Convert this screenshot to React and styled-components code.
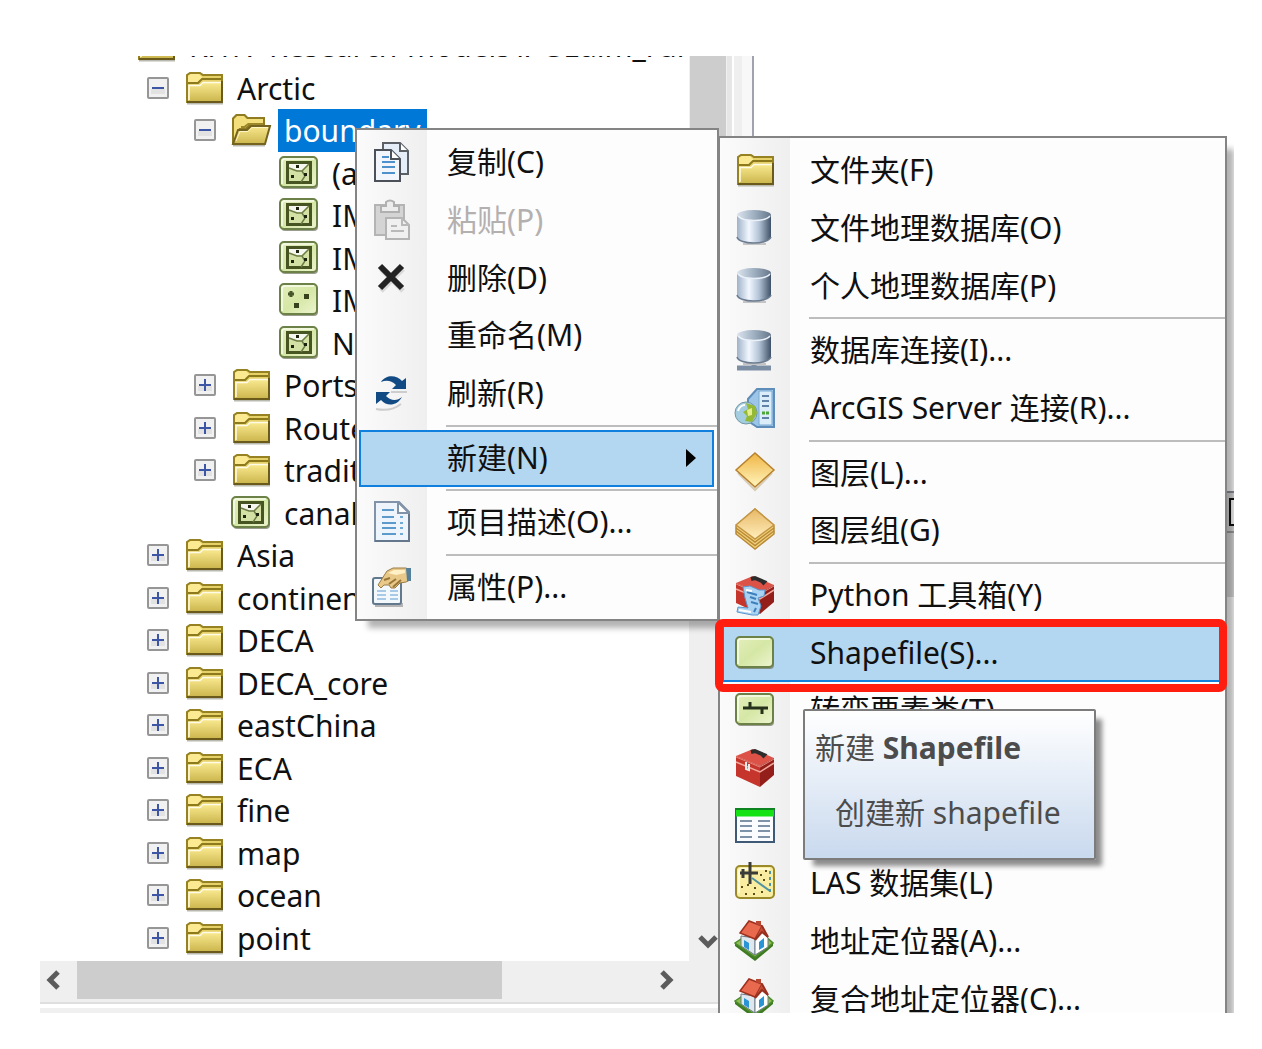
import React, { useState } from "react";
import styled, { createGlobalStyle, css } from "styled-components";

const GlobalStyle = createGlobalStyle`
  * {
    box-sizing: border-box;
  }

  body {
    margin: 0;
    background: #ffffff;
    font-family: "Noto Sans", "Noto Sans CJK SC", sans-serif;
    font-size: 30px;
    line-height: 40px;
    color: #101010;
  }

  button {
    font: inherit;
    color: inherit;
    background: none;
    border: none;
    padding: 0;
    margin: 0;
    text-align: left;
    cursor: default;
  }

  ul {
    list-style: none;
    margin: 0;
    padding: 0;
  }
`;

const Page = styled.main`
  padding: 56px 28px 36px 40px;
`;

const Workspace = styled.div`
  position: relative;
  display: flex;
  overflow: hidden;
`;

/* ---------- catalog pane ---------- */

const Pane = styled.section`
  flex: none;
  width: 687px;
  background: #efefef;
`;

const PaneBody = styled.div`
  display: flex;
`;

const Tree = styled.ul`
  flex: 1;
  min-width: 0;
  margin-top: -32px;
  padding-bottom: 2px;
  display: grid;
  grid-auto-rows: 42px 43px;
  background: #ffffff;
  overflow: hidden;
`;

const indents = [59, 107, 154, 202];

const TreeRow = styled.li`
  display: flex;
  align-items: center;
  padding-left: ${(props) => indents[props.$level]}px;
  white-space: nowrap;
`;

const Expander = styled.button`
  flex: none;
  display: flex;
  width: 22px;
  height: 22px;
  margin-right: 15px;
`;

const ExpanderSpace = styled.span`
  flex: none;
  width: 37px;
`;

const TreeIcon = styled.span`
  flex: none;
  display: flex;
  width: 47px;
`;

const TreeLabel = styled.button`
  height: 43px;
  padding: 2px 6px 0;

  ${(props) =>
    props.$selected &&
    css`
      background: #0078d7;
      color: #ffffff;
    `}
`;

const VScroll = styled.div`
  flex: none;
  width: 38px;
  display: flex;
  flex-direction: column;
  justify-content: space-between;
  align-items: center;
`;

const VThumb = styled.div`
  width: 36px;
  height: 400px;
  background: #cdcdcd;
`;

const ScrollButton = styled.button`
  flex: none;
  display: flex;
  align-items: center;
  justify-content: center;
  width: 37px;
  height: 38px;
`;

const HScroll = styled.div`
  display: flex;
  width: 649px;
  height: 38px;

  ${ScrollButton} {
    padding-right: 7px;
  }
`;

const HThumb = styled.div`
  width: 425px;
  background: #cdcdcd;
  margin-right: auto;
`;

const PaneFooter = styled.div`
  height: 14px;
  background: #f0f0f0;
  border-top: 3px solid #efefef;

  &::before {
    content: "";
    display: block;
    height: 4px;
    border-top: 2px solid #dfdfdf;
    background: #ffffff;
  }
`;

const Splitter = styled.div`
  flex: none;
  width: 27px;
  border-right: 2px solid #a0a3ae;
  background: linear-gradient(90deg, #e6e6e6 5px, #ffffff 5px 7px, #efefef 7px 15px, #f8f8f8 15px);
`;

/* ---------- map side, mostly hidden by the menus ---------- */

const MapSide = styled.div`
  flex: 1;
  display: flex;
  flex-direction: column;
  align-items: flex-end;
`;

const MapView = styled.div`
  height: 435px;
`;

const Ruler = styled.div`
  width: 9px;
  height: 42px;
  padding: 5px 0 5px 4px;
  background: #dcdcdc;
  border-top: 2px solid #8c909c;
  border-bottom: 2px solid #a0a0a0;
`;

const RulerBox = styled.div`
  height: 28px;
  border: 2px solid #101010;
  border-right: none;
  background: #ffffff;
`;

const MapStatus = styled.div`
  width: 9px;
  height: 64px;
  background: #dcdcdc;
`;

/* ---------- menus ---------- */

const Menu = styled.ul`
  position: absolute;
  left: ${(props) => props.$left}px;
  top: ${(props) => props.$top}px;
  width: ${(props) => props.$width}px;
  border: 2px solid #848484;
  padding: 4px 0 2px;
  background: linear-gradient(90deg, #fbfbfb, #efefef 70px, #fdfdfd 70px);
  box-shadow: 10px 10px 6px -3px rgba(0, 0, 0, 0.3);
`;

const MenuEntry = styled.li`
  position: relative;
  padding: 0 3px 0 2px;

  ${(props) =>
    props.$divided &&
    css`
      &::before {
        content: "";
        display: block;
        height: 7px;
        margin: 0 -3px 0 87px;
        background: linear-gradient(#fdfdfd 2px, #bdbdbd 2px 4px, #fdfdfd 4px);
      }
    `}
`;

const MenuButton = styled.button`
  display: flex;
  align-items: center;
  width: 100%;
  height: 58px;
  padding: 0 15px 2px 0;
  border: 2px solid transparent;
  white-space: nowrap;

  li:nth-child(3n) > & {
    height: 57px;
  }

  &:disabled {
    color: #b4b0b0;
  }

  ${(props) =>
    props.$active &&
    css`
      border-color: #0f80de;
      background: #b3d6f1;
    `}
`;

const MenuIcon = styled.span`
  flex: none;
  display: flex;
  justify-content: center;
  width: 62px;
  margin-right: 24px;
`;

const MenuLabel = styled.span`
  flex: 1;
`;

const Marker = styled.div`
  position: absolute;
  inset: -6px -2px -10px -5px;
  border: 8px solid #ff1e10;
  border-radius: 8px;
  pointer-events: none;
`;

const Tooltip = styled.div`
  position: absolute;
  left: 763px;
  top: 653px;
  width: 293px;
  padding: 17px 10px 25px;
  border: 2px solid #7c7c7c;
  border-radius: 2px;
  background: linear-gradient(#ffffff, #c9d9ee);
  box-shadow: 8px 8px 5px -2px rgba(0, 0, 0, 0.45);
  color: #4c4c4c;
  white-space: nowrap;
`;

const TooltipTitle = styled.p`
  margin: 0 0 25px;
`;

const TooltipText = styled.p`
  margin: 0;
  padding-left: 20px;
`;

/* ---------- icons ---------- */

const Box = ({ open }) => (
  <svg width="22" height="22" viewBox="0 0 22 22">
    <rect x="1" y="1" width="20" height="20" rx="1" fill="#f1f1f1" stroke="#969696" strokeWidth="2" />
    <path d="M4 17H18V12H4Z" fill="#e2e2e2" />
    <path d={open ? "M5 11H17" : "M5 11H17M11 5V17"} stroke="#3d55a5" strokeWidth="2" />
  </svg>
);

const FolderIcon = () => (
  <svg width="40" height="34" viewBox="-1 0 40 34">
    <defs>
      <linearGradient id="folder" x1="0" y1="0" x2="0" y2="1">
        <stop offset="0" stopColor="#f8e88e" />
        <stop offset="1" stopColor="#cdb74f" />
      </linearGradient>
    </defs>
    <path d="M2 32.500H38" stroke="#b9b9b0" strokeWidth="2" />
    <path d="M2 31V4L5 2H15L18 4H37V31Z" fill="#e6d168" stroke="#968222" strokeWidth="2" />
    <path d="M3 12V5L6 3H14L17 6V9L14 12Z" fill="#fbea91" />
    <path d="M3 12H13L17 8H36" stroke="#8d7a1c" strokeWidth="2" fill="none" />
    <path d="M4 30V15H15L18 12H36V30Z" fill="url(#folder)" />
    <path d="M4 29V14.500H15L18 11.500H36" stroke="#fffbe6" strokeWidth="1.500" fill="none" />
    <path d="M2 31H37V10" stroke="#6a5a1c" strokeWidth="2" fill="none" />
  </svg>
);

const OpenFolderIcon = () => (
  <svg width="42" height="34" viewBox="1 0 42 34">
    <path d="M3 32.500H35" stroke="#b9b9b0" strokeWidth="2" />
    <path d="M2 31V5L6 1H15L18 4H35V14H32V31Z" fill="#8f7b22" />
    <path d="M4 28V6L7 3H14L17 6H33V12H18L15 15H9Z" fill="#f3df7c" />
    <path d="M18 10H33V12H18L15 15H11V13H14Z" fill="#9c8729" />
    <path d="M3 31L8 17H17L21 13H40L35 31Z" fill="url(#folder)" stroke="#756420" strokeWidth="2" />
    <path d="M6 28L10 18.500H18L22 14.500H38" stroke="#fff6c4" strokeWidth="1" fill="none" />
  </svg>
);

const Tile = ({ children }) => (
  <svg width="40" height="34" viewBox="0 0 40 34">
    <defs>
      <linearGradient id="tile" x1="0" y1="0" x2="1" y2="1">
        <stop offset="0" stopColor="#e4efbd" />
        <stop offset="0.500" stopColor="#d5e7a5" />
        <stop offset="1" stopColor="#edf4cf" />
      </linearGradient>
    </defs>
    <rect x="2" y="3" width="37" height="30" rx="4" fill="#6d7260" opacity="0.700" />
    <rect x="1" y="1" width="37" height="30" rx="4" fill="url(#tile)" stroke="#6c8148" strokeWidth="2" />
    <path d="M3 28V6Q3 3 6 3H35" stroke="#f9fdec" strokeWidth="1.500" fill="none" />
    {children}
  </svg>
);

const PolygonIcon = () => (
  <Tile>
    <rect x="8.500" y="6.500" width="23" height="20" fill="#d3e2a4" stroke="#475523" strokeWidth="3" />
    <path d="M10 8H29L23 14H17L10 12Z" fill="#f5f7ee" />
    <path d="M10 12L18 15H23L30 8M23 15L26 20L22 26" stroke="#6d7c45" strokeWidth="1.500" fill="none" />
    <path d="M17 9h3v3h-3zM12 19h3v3h-3zM25 17h3v3h-3z" fill="#1c2410" />
  </Tile>
);

const PointIcon = () => (
  <Tile>
    <path d="M12 8v6M9 11h6" stroke="#47552a" strokeWidth="3" />
    <path d="M25 11h5v5h-5zM15 20h5v5h-5z" fill="#35421c" />
  </Tile>
);

const RouteIcon = () => (
  <Tile>
    <path d="M8 15H33M15 9V15M27 15V21" stroke="#26301a" strokeWidth="3" fill="none" />
  </Tile>
);

const CopyIcon = () => (
  <svg width="36" height="42" viewBox="0 0 36 42">
    <path d="M9 2H26L34 10V33H9Z" fill="#e4edf8" stroke="#5b5f66" strokeWidth="2" />
    <path d="M26 2V10H34" fill="#ffffff" stroke="#5b5f66" strokeWidth="2" />
    <path d="M1 9H17L26 18V40H1Z" fill="#f2f6fc" stroke="#4c5058" strokeWidth="2" />
    <path d="M17 9V18H26" fill="#ffffff" stroke="#4c5058" strokeWidth="2" />
    <path d="M8 16H15M8 21H21M8 26H21M8 32H21" stroke="#4d90cc" strokeWidth="2" />
  </svg>
);

const PasteIcon = () => (
  <svg width="36" height="42" viewBox="0 0 36 42">
    <path d="M1 6H30V36H1Z" fill="#d4d4d4" stroke="#b4b4b4" strokeWidth="2" />
    <path d="M7 13V7H12V3Q16 0 20 3V7H25V13Z" fill="#ececec" stroke="#b0b0b0" strokeWidth="2" />
    <path d="M12 19H28L35 26V40H12Z" fill="#f0f0f0" stroke="#b4b4b4" strokeWidth="2" />
    <path d="M28 19V26H35M17 27H23M17 32H30" stroke="#b9b9b9" strokeWidth="2" fill="none" />
  </svg>
);

const DeleteIcon = () => (
  <svg width="30" height="32" viewBox="0 0 30 32">
    <path d="M4 7L26 29M26 7L4 29" stroke="#d9d9d9" strokeWidth="5" />
    <path d="M3 4L25 26M25 4L3 26" stroke="#222222" strokeWidth="6" />
  </svg>
);

const RefreshIcon = () => (
  <svg width="36" height="36" viewBox="1 1 36 36">
    <path d="M3 35Q18 38 28 30M18 18H34" stroke="#cdcdcd" strokeWidth="2" fill="none" />
    <path d="M8 8C13 0 24 1 29 7L33 4V15H19L23 11C18 6 13 6 8 8Z" fill="#124a84" />
    <path d="M29 23C24 32 14 33 8 26L3 30V18H17L13 22C18 27 24 27 29 23Z" fill="#124a84" />
  </svg>
);

const DocumentIcon = () => (
  <svg width="36" height="42" viewBox="0 0 36 42">
    <path d="M1 1H25L35 11V40H1Z" fill="#eef4fb" stroke="#8193a8" strokeWidth="2" />
    <path d="M1 40H35V11" stroke="#65778c" strokeWidth="2" fill="none" />
    <path d="M24 1V12H35Z" fill="#ffffff" stroke="#8193a8" strokeWidth="2" />
    <path d="M8 9H20M8 16H20M8 22H22M8 27H22M8 33H22" stroke="#5c9acb" strokeWidth="2" />
    <path d="M26 16h3M26 22h3M26 27h3M26 33h3" stroke="#6fa9d6" strokeWidth="2" />
  </svg>
);

const PropertiesIcon = () => (
  <svg width="40" height="42" viewBox="0 0 40 42">
    <path d="M3 39H31" stroke="#b4b4b4" strokeWidth="4" />
    <rect x="1" y="12" width="28" height="26" rx="2" fill="#f3f8fc" stroke="#62788c" strokeWidth="2" />
    <path d="M5 25H14M18 25H26M5 29H14M18 29H26M5 33H14M18 33H26" stroke="#a9cae6" strokeWidth="2" />
    <path d="M6 19L15 5L21 2H34L38 4V14L34 16L28 17L23 22L19 22L17 19L12 19L9 22Z" fill="#e8c98a" stroke="#9b7b44" strokeWidth="1" />
    <path d="M16 7L22 4H33V7L24 9Z" fill="#fff0c6" />
    <path d="M12 14L18 12M17 18L24 13M21 21L29 14" stroke="#9a7638" strokeWidth="2" />
    <path d="M34 2H39V15H35Z" fill="#55809b" />
  </svg>
);

const CylinderIcon = ({ network }) => (
  <svg width="38" height={network ? 42 : 38} viewBox={network ? "1 0 38 42" : "1 0 38 38"}>
    <defs>
      <linearGradient id="metal">
        <stop offset="0" stopColor="#9fb2c8" />
        <stop offset="0.350" stopColor="#f2f7ff" />
        <stop offset="0.650" stopColor="#b3c3d6" />
        <stop offset="1" stopColor="#3f5167" />
      </linearGradient>
      <linearGradient id="metalTop">
        <stop offset="0" stopColor="#dbe4ee" />
        <stop offset="0.500" stopColor="#9fb0c1" />
        <stop offset="1" stopColor="#66778c" />
      </linearGradient>
    </defs>
    {network && <path d="M19 32V38M2 39H36" stroke="#7c8ea3" strokeWidth="5" />}
    <path d="M8 35H31" stroke="#c4c4c4" strokeWidth="2" />
    <path d="M2 7V28C4 36 33 36 36 28V7Z" fill="url(#metal)" />
    <path d="M2 28C4 36 33 36 36 28" stroke="#6b7c90" strokeWidth="1.500" fill="none" />
    <ellipse cx="19" cy="6" rx="17" ry="5" fill="url(#metalTop)" />
    <path d="M3 7C8 13 30 13 35 7" stroke="#eaf0f8" strokeWidth="1.500" fill="none" />
  </svg>
);

const ServerIcon = () => (
  <svg width="42" height="42" viewBox="0 0 42 42">
    <path d="M14 12L23 2H40V40H23L14 34Z" fill="#9cc5e8" stroke="#5d8db8" strokeWidth="2" />
    <path d="M25 4H38V38H25Z" fill="#dcedfa" stroke="#79a8d1" strokeWidth="1" />
    <path d="M28 9H35M28 14H35M28 19H35M28 31H35" stroke="#5f82a8" strokeWidth="2" />
    <path d="M28 26h3M32 26h3" stroke="#4da63a" strokeWidth="3" />
    <circle cx="12" cy="26" r="11" fill="#a4cde0" stroke="#7298a4" strokeWidth="1" />
    <path d="M12 16L21 19L23 26L18 35L11 34L13 29L9 25L14 22Z" fill="#94b935" />
    <path d="M13 23L18 21L18 28L14 29Z" fill="#e5ef8d" />
    <path d="M4 24Q6 18 11 18" stroke="#ffffff" strokeWidth="2" fill="none" />
  </svg>
);

const LayerIcon = () => (
  <svg width="42" height="44" viewBox="0 0 42 44">
    <path d="M4 22L21 39L38 22" stroke="#d8cbb2" strokeWidth="2" fill="none" />
    <defs>
      <linearGradient id="layer" x1="0" y1="0" x2="0" y2="1">
        <stop offset="0" stopColor="#f0b545" />
        <stop offset="1" stopColor="#fff5bd" />
      </linearGradient>
    </defs>
    <path d="M21 2L40 19L21 36L2 19Z" fill="url(#layer)" stroke="#b6822e" strokeWidth="1.500" />
  </svg>
);

const LayerGroupIcon = () => (
  <svg width="42" height="44" viewBox="0 0 42 44">
    <defs>
      <linearGradient id="layerTop" x1="0" y1="0" x2="0" y2="1">
        <stop offset="0" stopColor="#e8b866" />
        <stop offset="1" stopColor="#ffeebc" />
      </linearGradient>
    </defs>
    <path d="M21 1L40 18V26L21 41L2 26V18Z" fill="#f1d07c" stroke="#b88a38" strokeWidth="1.500" />
    <path d="M2 20L21 34L40 20M2 23L21 37.500L40 23" stroke="#b98a35" strokeWidth="1.500" fill="none" />
    <path d="M21 1L40 17L21 31L2 17Z" fill="url(#layerTop)" stroke="#c39544" strokeWidth="1.500" />
  </svg>
);

const ToolboxIcon = ({ script }) => (
  <svg width="42" height="42" viewBox="0 0 42 42">
    <path d="M2 9L19 2L40 11L26 19Z" fill="#dd5246" />
    <path d="M2 9L26 19V40L2 29Z" fill="#c5352c" />
    <path d="M26 19L40 11V28L26 40Z" fill="#931e1a" />
    <path d="M2 15L26 25L40 16" stroke="#f1a59b" strokeWidth="1.500" fill="none" />
    <path d="M2 10L26 20L40 12" stroke="#e98579" strokeWidth="1" fill="none" />
    <path d="M17 5L21 4L30 8L28 10" stroke="#2c2c2c" strokeWidth="4" fill="none" />
    <path d="M12 15V22L15 23V17" stroke="#e9e9e9" strokeWidth="2" fill="none" />
    {script && (
      <>
        <path d="M9 13L16 12L25 16L31 16L30 22L24 24L27 32L24 41H18L3 38L4 33L14 34L11 24Z" fill="#a9d2f3" stroke="#5a97cb" strokeWidth="1" />
        <path d="M13 18L23 21M16 23L22 25M17 28L24 30M22 34L20 38" stroke="#3d80bb" strokeWidth="2" fill="none" />
        <path d="M5 36L17 38M12 16L18 17" stroke="#ffffff" strokeWidth="2" />
      </>
    )}
  </svg>
);

const TableIcon = () => (
  <svg width="42" height="36" viewBox="0 0 42 36">
    <rect x="2" y="2" width="38" height="32" fill="#fafcff" stroke="#3f5a76" strokeWidth="2" />
    <path d="M2 5H40" stroke="#15e215" strokeWidth="7" />
    <path d="M1 1H41" stroke="#0c8420" strokeWidth="2" />
    <path d="M6 13H18M6 18H18M6 23H18M6 29H18M24 13H36M24 18H36M24 23H36M24 29H36" stroke="#7f93a8" strokeWidth="2" />
  </svg>
);

const LasIcon = () => (
  <svg width="42" height="44" viewBox="0 0 42 44">
    <rect x="2" y="5" width="38" height="32" rx="4" fill="#f8eda0" stroke="#9b8a2a" strokeWidth="2" />
    <path d="M5 32V10Q5 8 8 8H36" stroke="#fffbd8" strokeWidth="2" fill="none" />
    <path d="M7 25h2v2h-2zM13 23h2v2h-2zM11 32h2v2h-2zM20 26h2v2h-2zM19 32h2v2h-2zM27 30h2v2h-2zM26 13h2v2h-2zM31 9h2v2h-2zM29 18h2v2h-2z" fill="#5c4e18" />
    <path d="M18 17L36 30" stroke="#4f92a2" strokeWidth="2" />
    <path d="M36 10V34" stroke="#4f92a2" strokeWidth="2" strokeDasharray="3 3" />
    <path d="M16 1V23M6 12H24M9 8V17" stroke="#3b3b38" strokeWidth="3" />
  </svg>
);

const HouseIcon = () => (
  <svg width="42" height="44" viewBox="1 0 42 44">
    <path d="M2 24L22 38L40 24V27L22 42L2 27Z" fill="#3f7a22" />
    <path d="M2 24L14 16H31L40 24L22 38Z" fill="#8ec04e" stroke="#4b8a28" strokeWidth="1.500" />
    <path d="M8 17V27L22 36V19Z" fill="#dfe8ef" stroke="#6f7d88" strokeWidth="1" />
    <path d="M22 21L29 12L35 19V28L22 36Z" fill="#ffffff" stroke="#6f7d88" strokeWidth="1" />
    <path d="M11 21L16 24V31L11 28ZM26 23L31 19V28L26 31Z" fill="#2b94d4" />
    <path d="M7 14L16 2L29 7L22 20Z" fill="#e8694e" stroke="#9c2f1e" strokeWidth="1.500" />
    <path d="M29 7L35 18L29 13L22 21" stroke="#98301f" strokeWidth="2" fill="#c84d36" />
    <path d="M23 5V2H28V7" fill="#b84733" />
  </svg>
);

const Chevron = ({ d }) => (
  <svg width="20" height="20" viewBox="0 0 20 20">
    <path d={d} stroke="#5c5c5c" strokeWidth="5" fill="none" />
  </svg>
);

const SubmenuArrow = () => (
  <svg width="12" height="18" viewBox="0 0 12 18">
    <path d="M1 0L11 9L1 18Z" fill="#000000" />
  </svg>
);

/* ---------- data ---------- */

const treeItems = [
  { level: 0, label: "K:\\17 Research-models\\7 SEaim_run", open: true },
  { level: 1, label: "Arctic", open: true },
  { level: 2, label: "boundary", open: true, icon: OpenFolderIcon },
  { level: 3, label: "(arctic)", icon: PolygonIcon, leaf: true },
  { level: 3, label: "IMO_1", icon: PolygonIcon, leaf: true },
  { level: 3, label: "IMO_2", icon: PolygonIcon, leaf: true },
  { level: 3, label: "IMO_3", icon: PointIcon, leaf: true },
  { level: 3, label: "NSR", icon: PolygonIcon, leaf: true },
  { level: 2, label: "Ports" },
  { level: 2, label: "Route" },
  { level: 2, label: "tradition" },
  { level: 2, label: "canal", icon: PolygonIcon, leaf: true },
  { level: 1, label: "Asia" },
  { level: 1, label: "continent" },
  { level: 1, label: "DECA" },
  { level: 1, label: "DECA_core" },
  { level: 1, label: "eastChina" },
  { level: 1, label: "ECA" },
  { level: 1, label: "fine" },
  { level: 1, label: "map" },
  { level: 1, label: "ocean" },
  { level: 1, label: "point" },
];

const contextItems = [
  { label: "复制(C)", icon: <CopyIcon /> },
  { label: "粘贴(P)", icon: <PasteIcon />, disabled: true },
  { label: "删除(D)", icon: <DeleteIcon /> },
  { label: "重命名(M)" },
  { label: "刷新(R)", icon: <RefreshIcon /> },
  { label: "新建(N)", divided: true, active: true, submenu: true },
  { label: "项目描述(O)...", icon: <DocumentIcon />, divided: true },
  { label: "属性(P)...", icon: <PropertiesIcon />, divided: true },
];

const newItems = [
  { label: "文件夹(F)", icon: <FolderIcon /> },
  { label: "文件地理数据库(O)", icon: <CylinderIcon /> },
  { label: "个人地理数据库(P)", icon: <CylinderIcon /> },
  { label: "数据库连接(I)...", icon: <CylinderIcon network />, divided: true },
  { label: "ArcGIS Server 连接(R)...", icon: <ServerIcon /> },
  { label: "图层(L)...", icon: <LayerIcon />, divided: true },
  { label: "图层组(G)", icon: <LayerGroupIcon /> },
  { label: "Python 工具箱(Y)", icon: <ToolboxIcon script />, divided: true },
  { label: "Shapefile(S)...", icon: <Tile />, active: true, marked: true },
  { label: "转弯要素类(T)", icon: <RouteIcon /> },
  { label: "工具箱(T)", icon: <ToolboxIcon /> },
  { label: "表(T)", icon: <TableIcon /> },
  { label: "LAS 数据集(L)", icon: <LasIcon /> },
  { label: "地址定位器(A)...", icon: <HouseIcon /> },
  { label: "复合地址定位器(C)...", icon: <HouseIcon /> },
];

const TreeItem = ({ item, selected, onSelect }) => {
  const Icon = item.icon || FolderIcon;

  return (
    <TreeRow $level={item.level}>
      {item.leaf ? (
        <ExpanderSpace />
      ) : (
        <Expander aria-label={"toggle " + item.label}>
          <Box open={item.open} />
        </Expander>
      )}
      <TreeIcon>
        <Icon />
      </TreeIcon>
      <TreeLabel $selected={selected} onClick={onSelect}>
        {item.label}
      </TreeLabel>
    </TreeRow>
  );
};

const PopupMenu = ({ items, left, top, width }) => (
  <Menu $left={left} $top={top} $width={width}>
    {items.map((item) => (
      <MenuEntry key={item.label} $divided={item.divided}>
        <MenuButton $active={item.active} disabled={item.disabled}>
          <MenuIcon>{item.icon}</MenuIcon>
          <MenuLabel>{item.label}</MenuLabel>
          {item.submenu && <SubmenuArrow />}
        </MenuButton>
        {item.marked && <Marker />}
      </MenuEntry>
    ))}
  </Menu>
);

const App = () => {
  const [selected, setSelected] = useState("boundary");

  return (
    <>
      <GlobalStyle />
      <Page>
        <Workspace>
          <Pane>
            <PaneBody>
              <Tree>
                {treeItems.map((item) => (
                  <TreeItem
                    key={item.label}
                    item={item}
                    selected={item.label === selected}
                    onSelect={() => setSelected(item.label)}
                  />
                ))}
              </Tree>
              <VScroll>
                <VThumb />
                <ScrollButton aria-label="scroll down">
                  <Chevron d="M2 5L10 13L18 5" />
                </ScrollButton>
              </VScroll>
            </PaneBody>
            <HScroll>
              <ScrollButton aria-label="scroll left">
                <Chevron d="M13 2L5 10L13 18" />
              </ScrollButton>
              <HThumb />
              <ScrollButton aria-label="scroll right">
                <Chevron d="M5 2L13 10L5 18" />
              </ScrollButton>
            </HScroll>
            <PaneFooter />
          </Pane>
          <Splitter />
          <MapSide>
            <MapView />
            <Ruler>
              <RulerBox />
            </Ruler>
            <MapStatus />
          </MapSide>

          <PopupMenu items={contextItems} left={315} top={72} width={364} />
          <PopupMenu items={newItems} left={678} top={80} width={509} />
          <Tooltip role="tooltip">
            <TooltipTitle>
              新建 <b>Shapefile</b>
            </TooltipTitle>
            <TooltipText>创建新 shapefile</TooltipText>
          </Tooltip>
        </Workspace>
      </Page>
    </>
  );
};

export default App;
